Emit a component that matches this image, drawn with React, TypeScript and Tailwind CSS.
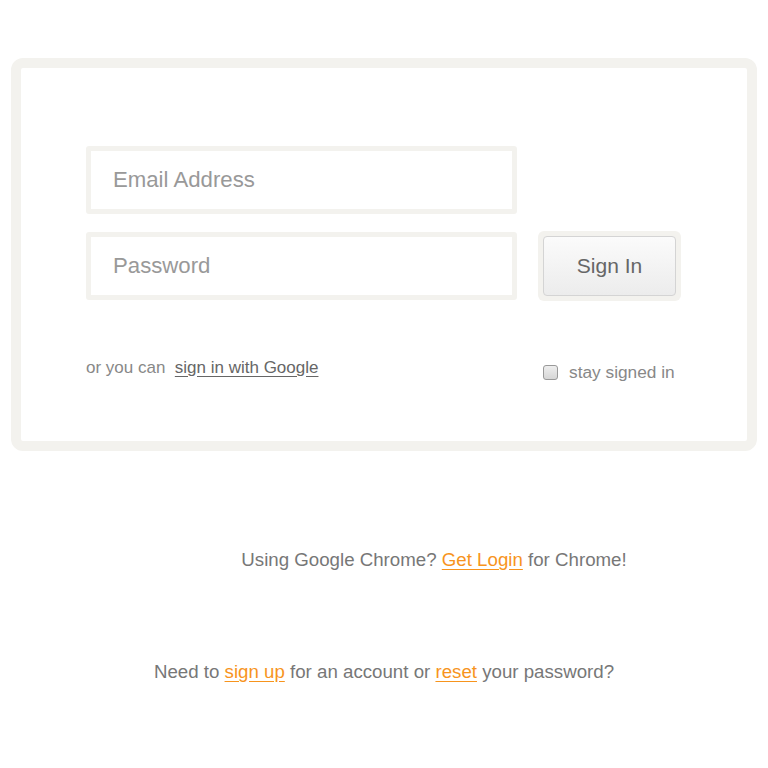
import React from "react";

export default function App() {
  return (
    <div className="w-[768px] h-[768px] bg-white relative" style={{ fontFamily: '"Liberation Sans", Arial, sans-serif' }}>
      <div className="pt-[58px] px-[11px]">
        <div className="h-[393px] border-[10px] border-[#f3f2ee] rounded-[12px] bg-white pl-[65px] pt-[78px]">
          <div className="flex">
            <div className="flex flex-col gap-[18px]">
              <div className="w-[431px] h-[68px] border-[5px] border-[#f3f2ee] rounded-[3px] flex items-center pl-[22px] text-[22.2px] text-[#999]">
                Email Address
              </div>
              <div className="w-[431px] h-[68px] border-[5px] border-[#f3f2ee] rounded-[3px] flex items-center pl-[22px] text-[22.2px] text-[#999]">
                Password
              </div>
            </div>
            <div className="ml-[21px] mt-[85px] w-[143px] h-[70px] rounded-[6px] bg-[#f3f2ee] p-[5px]">
              <div className="w-full h-full rounded-[4px] border border-[#d4d4d4] bg-gradient-to-b from-[#fbfbfb] to-[#ececec] flex items-center justify-center text-[21px] text-[#666]">
                Sign In
              </div>
            </div>
          </div>
          <div className="flex mt-[54px]">
            <div className="w-[456px] text-[17px] text-[#888]">
              or you can&nbsp; <span className="text-[#666] underline underline-offset-[3px]">sign in with Google</span>
            </div>
            <div className="ml-[1px] mt-[5px] flex items-center text-[17.3px] text-[#888]">
              <span className="w-[15px] h-[15px] rounded-[3px] border border-[#999] bg-gradient-to-b from-[#eee] to-[#d6d6d6] mr-[11px]"></span>
              stay signed in
            </div>
          </div>
        </div>
      </div>
      <div className="mt-[95px] pl-[100px] text-center text-[18.7px] text-[#777]">
        Using Google Chrome? <span className="text-[#f7941d] underline underline-offset-[3px]">Get Login</span> for Chrome!
      </div>
      <div className="mt-[84px] text-center text-[18.7px] text-[#777]">
        Need to <span className="text-[#f7941d] underline underline-offset-[3px]">sign up</span> for an account or <span className="text-[#f7941d] underline underline-offset-[3px]">reset</span> your password?
      </div>
    </div>
  );
}
